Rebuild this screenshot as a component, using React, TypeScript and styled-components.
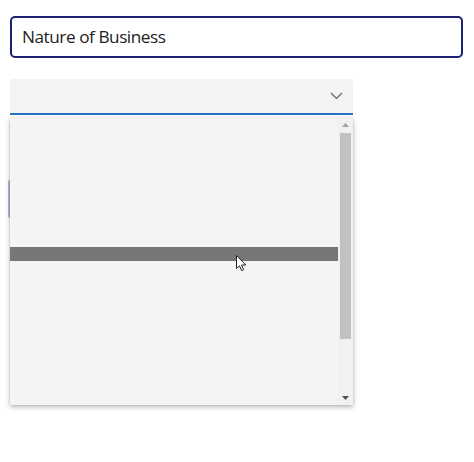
import React from "react";
import styled, { createGlobalStyle } from "styled-components";

const Global = createGlobalStyle`
  html, body { margin: 0; padding: 0; background: #ffffff; }
  body { font-family: "Open Sans", "Noto Sans", sans-serif; }
`;

const Page = styled.div`
  width: 474px;
  height: 462px;
  box-sizing: border-box;
  padding: 16px 11px 0 10px;
  display: flex;
  flex-direction: column;
  position: relative;
`;

const TextInput = styled.div`
  box-sizing: border-box;
  height: 42px;
  border: 2px solid #1c2070;
  border-radius: 5px;
  display: flex;
  align-items: center;
  padding: 0 0 1px 10px;
  font-size: 17.2px;
  color: #222222;
  letter-spacing: -0.45px;
`;

const DropdownWrap = styled.div`
  position: relative;
  width: 343px;
  margin-top: 21px;
`;

const DropdownField = styled.div`
  box-sizing: border-box;
  height: 36px;
  background: #f3f3f3;
  border-bottom: 2px solid #2a73c0;
  border-radius: 3px 3px 0 0;
  display: flex;
  align-items: center;
  justify-content: flex-end;
  padding-right: 10px;
`;

const HiddenField = styled.div`
  box-sizing: border-box;
  height: 40px;
  width: 100%;
  margin-top: 64px;
  margin-left: -2px;
  border-left: 2px solid #b4b5d4;
  border-radius: 4px;
`;

const Popup = styled.div`
  position: absolute;
  top: 39px;
  left: 0;
  width: 343px;
  height: 287px;
  background: #f4f4f4;
  box-shadow: 0 2px 5px rgba(0, 0, 0, 0.28), 0 0 2px rgba(0, 0, 0, 0.12);
  display: flex;
`;

const List = styled.div`
  flex: 1;
  display: flex;
  flex-direction: column;
  padding-top: 129px;
`;

const Row = styled.div<{ $active?: boolean }>`
  height: 14px;
  background: ${(p) => (p.$active ? "#777777" : "transparent")};
`;

const Scrollbar = styled.div`
  width: 15px;
  display: flex;
  flex-direction: column;
  align-items: center;
  background: #f1f1f1;
`;

const ArrowBtn = styled.div`
  height: 14px;
  width: 100%;
  display: flex;
  align-items: center;
  justify-content: center;
`;

const Thumb = styled.div`
  width: 11px;
  height: 206px;
  background: #c1c1c1;
  margin-top: 1px;
`;

const Track = styled.div`
  flex: 1;
`;

const Cursor = styled.svg`
  position: absolute;
  left: 236px;
  top: 255px;
`;

export default function App() {
  return (
    <>
      <Global />
      <Page>
        <TextInput>Nature of Business</TextInput>
        <DropdownWrap>
          <DropdownField>
            <svg width="13" height="8" viewBox="0 0 13 8">
              <path d="M1 1 L6.5 6.5 L12 1" fill="none" stroke="#666" strokeWidth="1.2" />
            </svg>
          </DropdownField>
          <HiddenField />
          <Popup>
            <List>
              <Row $active />
            </List>
            <Scrollbar>
              <ArrowBtn>
                <svg width="7" height="4" viewBox="0 0 7 4">
                  <path d="M0 4 L3.5 0 L7 4 Z" fill="#a3a3a3" />
                </svg>
              </ArrowBtn>
              <Thumb />
              <Track />
              <ArrowBtn>
                <svg width="7" height="4" viewBox="0 0 7 4">
                  <path d="M0 0 L3.5 4 L7 0 Z" fill="#505050" />
                </svg>
              </ArrowBtn>
            </Scrollbar>
          </Popup>
        </DropdownWrap>
        <Cursor width="12" height="17" viewBox="0 0 12 17">
          <path
            d="M0.5 0.5 L0.5 13.5 L3.5 10.8 L5.6 15.6 L7.6 14.7 L5.6 10 L9.8 10 Z"
            fill="#ffffff"
            stroke="#222"
            strokeWidth="1"
            strokeLinejoin="round"
          />
        </Cursor>
      </Page>
    </>
  );
}
